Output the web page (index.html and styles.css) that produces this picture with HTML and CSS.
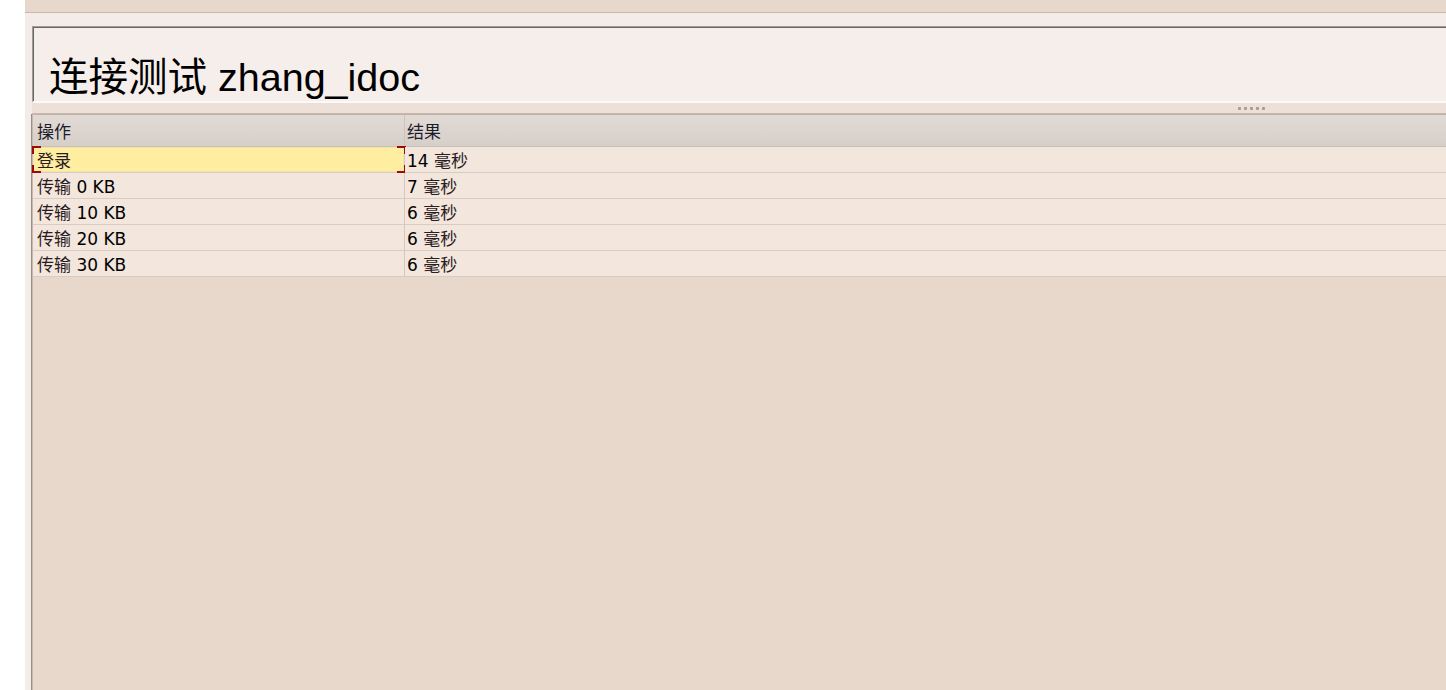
FILE: index.html
```html
<!DOCTYPE html>
<html lang="zh">
<head>
<meta charset="utf-8">
<title>连接测试</title>
<link rel="stylesheet" href="styles.css">
</head>
<body>
<div class="window">
  <div class="topbar"></div>
  <div class="spacer"></div>
  <div class="titlebox">
    <h1 class="title">连接测试 zhang_idoc</h1>
  </div>
  <div class="splitter">
    <div class="grip"><span></span><span></span><span></span><span></span><span></span></div>
  </div>
  <div class="tablearea">
    <div class="grid">
      <div class="hcell">操作</div>
      <div class="hcell">结果</div>

      <div class="cell sel"><span class="cjk">登录</span><i class="c tl"></i><i class="c tr"></i><i class="c bl"></i><i class="c br"></i></div>
      <div class="cell">14 <span class="cjk">毫秒</span></div>

      <div class="cell"><span class="cjk">传输</span> 0 KB</div>
      <div class="cell">7 <span class="cjk">毫秒</span></div>

      <div class="cell"><span class="cjk">传输</span> 10 KB</div>
      <div class="cell">6 <span class="cjk">毫秒</span></div>

      <div class="cell"><span class="cjk">传输</span> 20 KB</div>
      <div class="cell">6 <span class="cjk">毫秒</span></div>

      <div class="cell"><span class="cjk">传输</span> 30 KB</div>
      <div class="cell">6 <span class="cjk">毫秒</span></div>
    </div>
  </div>
</div>
</body>
</html>
```

FILE: styles.css
```css
html, body {
  margin: 0;
  padding: 0;
  background: #ffffff;
  height: 690px;
  overflow: hidden;
}
.window {
  margin-left: 25px;
  height: 690px;
  background: #f4ece8;
  display: flex;
  flex-direction: column;
  font-family: "DejaVu Sans", "Noto Sans CJK SC", sans-serif;
}
.topbar {
  height: 12px;
  background: #e8d8cc;
  border-bottom: 1px solid #c9b8ac;
  flex: none;
}
.spacer {
  height: 13px;
  flex: none;
}
.titlebox {
  flex: none;
  margin-left: 7px;
  height: 74px;
  background: #f5eeea;
  border-top: 1px solid #a09c9a;
  border-left: 1px solid #a09c9a;
  box-shadow: inset 1px 1px 0 #666666;
  border-bottom: 2px solid #fafafa;
  display: flex;
  align-items: flex-end;
  overflow: hidden;
}
.title {
  margin: 0 0 0 16px;
  font-family: "Liberation Sans", "Noto Sans CJK SC", sans-serif;
  font-weight: normal;
  font-size: 39.5px;
  line-height: 48px;
  color: #000000;
}
.splitter {
  flex: none;
  height: 10px;
  margin-left: 7px;
  background: #ece0d9;
  border-bottom: 1px solid #c9b8ac;
  display: flex;
  justify-content: flex-end;
  align-items: center;
}
.grip {
  display: flex;
  gap: 3px;
  margin-right: 181px;
}
.grip span {
  width: 3px;
  height: 3px;
  background: #a99a92;
  border-radius: 1px;
}
.tablearea {
  flex: 1;
  margin-left: 6px;
  background: #e8d8cc;
  border-left: 1px solid #9a8e88;
  box-shadow: inset 1px 0 0 #c8b8b0;
  padding-left: 1px;
  overflow: hidden;
}
.grid {
  display: grid;
  width: calc(100% + 40px);
  grid-template-columns: 372px 1fr;
  grid-template-rows: 32px;
  grid-auto-rows: 26px;
  background: #f3e6dc;
  border-top: 1px solid #c0b2a8;
}
.hcell {
  box-sizing: border-box;
  background: linear-gradient(#e2dad4, #dad2cc 70%, #d6cec8);
  border-bottom: 1px solid #c9c0b8;
  border-right: 1px solid #cdc3bc;
  padding: 4px 0 0 4px;
  font-size: 17px;
  line-height: 24px;
  color: #1c1c2c;
  font-family: "Noto Sans CJK SC", sans-serif;
}
.hcell:nth-child(2) {
  padding-left: 2px;
}
.cell {
  position: relative;
  box-sizing: border-box;
  border-bottom: 1px solid #d8ccc4;
  border-right: 1px solid #d4c8c0;
  padding: 0 0 0 4px;
  font-size: 17px;
  line-height: 25px;
  color: #000000;
  background: #f3e6dc;
}
.cell:nth-child(even) {
  padding-left: 2px;
}
.cjk {
  font-family: "Noto Sans CJK SC", sans-serif;
  font-size: 17px;
  color: #2a1c22;
}
.sel {
  background: #ffeea0;
  box-shadow: inset 0 0 0 1px #f2e2b0;
}
.c {
  position: absolute;
  width: 7px;
  height: 6px;
  border: 0 solid #a00808;
}
.tl { left: -1px; top: -1px; border-top-width: 2px; border-left-width: 2px; }
.tr { right: -2px; top: -1px; border-top-width: 2px; border-right-width: 2px; }
.bl { left: -1px; bottom: -1px; border-bottom-width: 2px; border-left-width: 2px; }
.br { right: -2px; bottom: -1px; border-bottom-width: 2px; border-right-width: 2px; }
```
